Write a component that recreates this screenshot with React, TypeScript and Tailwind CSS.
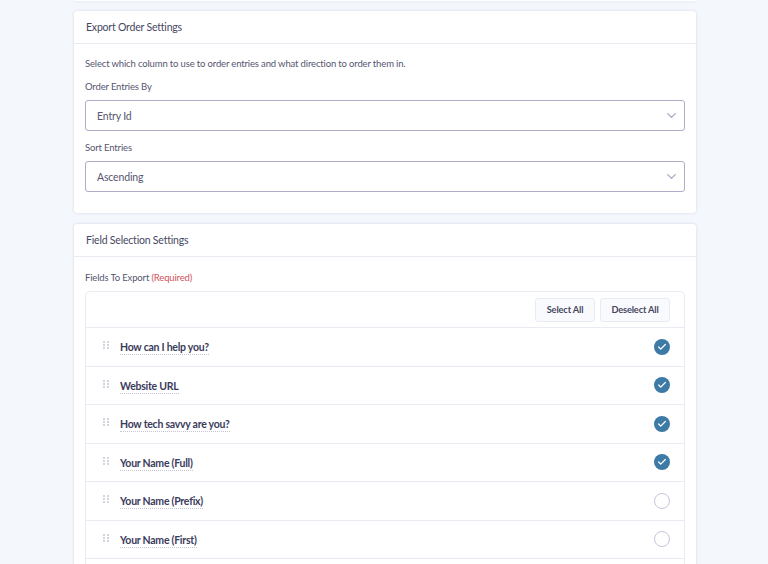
import { ChevronDown, Check } from 'lucide-react';

const fields = [
    { name: 'How can I help you?', checked: true },
    { name: 'Website URL', checked: true },
    { name: 'How tech savvy are you?', checked: true },
    { name: 'Your Name (Full)', checked: true },
    { name: 'Your Name (Prefix)', checked: false },
    { name: 'Your Name (First)', checked: false },
];

const labelClass = 'text-[9.5px] leading-[14px] tracking-[-0.15px] text-[#55566f]';

const Card = ({ title, className, children }: { title: string; className: string; children: React.ReactNode }) => (
    <div className={`rounded-[3px] bg-white shadow-[0_0_3px_rgba(35,40,100,0.16)] ${className}`}>
        <div className="flex h-[33px] items-center border-b border-[#e9ebf3] px-3 pt-px text-[10.5px] tracking-[-0.2px] text-[#46475f]">{title}</div>
        {children}
    </div>
);

const SelectBox = ({ value }: { value: string }) => (
    <div className="flex h-[31px] items-center justify-between rounded-[3px] border border-[#adacc9] bg-white pl-[11px] pr-[5px] text-[10.5px] tracking-[-0.15px] text-[#55566f]">
        <span className="mt-[2px]">{value}</span>
        <ChevronDown size={15} strokeWidth={2.25} className="text-[#a9a9c6]" />
    </div>
);

const DragHandle = () => (
    <div className="grid h-[8px] w-[6px] grid-cols-2 gap-x-[1px] gap-y-[1px]">
        {[0, 1, 2, 3, 4, 5].map((i) => (
            <span key={i} className="h-[2px] w-[2px] bg-[#d2d4e0]" />
        ))}
    </div>
);

const Row = ({ name, checked }: { name: string; checked: boolean }) => (
    <div className="flex h-[38.5px] shrink-0 items-center justify-between border-b border-[#e9ebf3] pl-[17px] pr-[14px]">
        <div className="flex items-center gap-[11px]">
            <div className="-mt-[3px]"><DragHandle /></div>
            <span className="mt-[2px] border-b border-dotted border-[#c4c6d4] text-[10.5px] leading-[14px] font-bold tracking-[-0.25px] text-[#3b3c5c]">{name}</span>
        </div>
        {checked ? (
            <span className="flex h-[16px] w-[16px] items-center justify-center rounded-full bg-[#3d7aa5]">
                <Check size={10} strokeWidth={3} className="text-white" />
            </span>
        ) : (
            <span className="h-[16px] w-[16px] rounded-full border-[1.5px] border-[#c5c5dd] bg-white" />
        )}
    </div>
);

export default function App() {
    return (
        <div className="h-[564px] overflow-hidden bg-[#f4f7fc] font-['Lato',sans-serif]">
            <div className="ml-[74px] w-[622px]">
                <div className="h-px bg-white shadow-[0_0_3px_rgba(35,40,100,0.16)]" />
                <Card title="Export Order Settings" className="mt-[10px] h-[202px]">
                    <div className="flex flex-col px-[11px] pt-[13px]">
                        <p className={labelClass}>Select which column to use to order entries and what direction to order them in.</p>
                        <label className={`mt-[9px] mb-[6px] ${labelClass}`}>Order Entries By</label>
                        <SelectBox value="Entry Id" />
                        <label className={`mt-[10px] mb-[6px] ${labelClass}`}>Sort Entries</label>
                        <SelectBox value="Ascending" />
                    </div>
                </Card>
                <Card title="Field Selection Settings" className="mt-[11px] h-[400px]">
                    <div className="flex flex-col px-[11px] pt-[14px]">
                        <label className={`mb-[6px] ${labelClass}`}>
                            Fields To Export <span className="text-[#d0535b]">(Required)</span>
                        </label>
                        <div className="rounded-[5px] border border-[#e9ebf3]">
                            <div className="flex h-[36px] items-center justify-end gap-[5px] border-b border-[#e9ebf3] pr-[14px]">
                                <button className="h-[24px] w-[60px] rounded-[3px] border border-[#e9ebf3] bg-[#f9fafe] text-[9.25px] font-bold tracking-[-0.15px] text-[#46475f]">Select All</button>
                                <button className="h-[24px] w-[70px] rounded-[3px] border border-[#e9ebf3] bg-[#f9fafe] text-[9.25px] font-bold tracking-[-0.15px] text-[#46475f]">Deselect All</button>
                            </div>
                            {fields.map((f) => (
                                <Row key={f.name} name={f.name} checked={f.checked} />
                            ))}
                            <div className="h-[38.5px]" />
                        </div>
                    </div>
                </Card>
            </div>
        </div>
    );
}
